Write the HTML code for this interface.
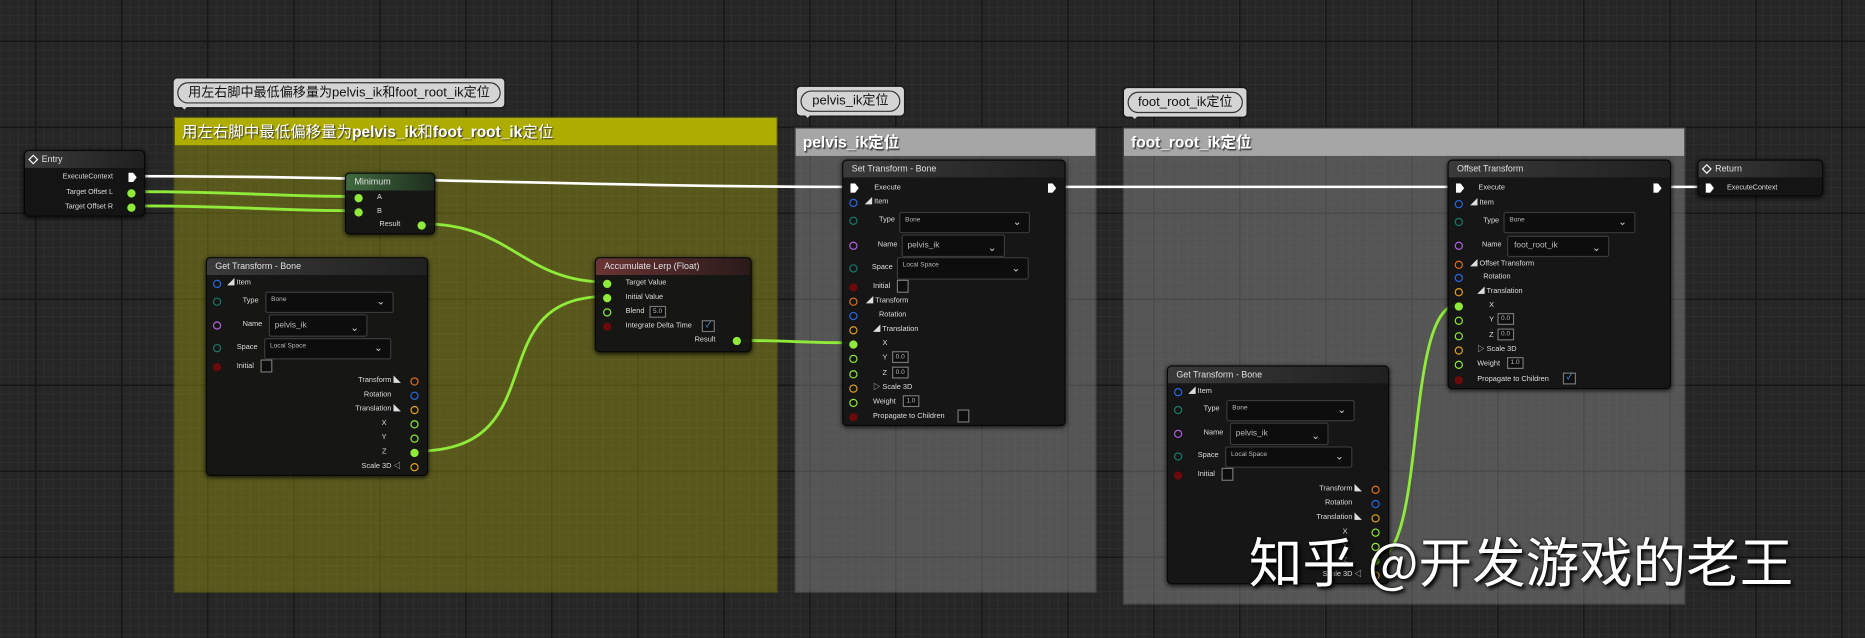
<!DOCTYPE html>
<html><head><meta charset="utf-8"><style>
html,body{margin:0;padding:0;width:1865px;height:638px;overflow:hidden}
body{background-color:#262626;
background-image:linear-gradient(90deg,#161616 1.5px,transparent 1.5px),linear-gradient(0deg,#161616 1.5px,transparent 1.5px),linear-gradient(90deg,#2e2e2e 1px,transparent 1px),linear-gradient(0deg,#2e2e2e 1px,transparent 1px);
background-size:86px 86px,86px 86px,8.6px 8.6px,8.6px 8.6px;background-position:35px 0,0 42px,35px 0,0 42px;
font-family:"Liberation Sans","Noto Sans CJK SC",sans-serif}
#w{position:absolute;left:0;top:0;width:1568px;height:536px;transform:scale(1.18941,1.1903);transform-origin:0 0}
.a{position:absolute}
.cm{position:absolute;border:1px solid rgba(0,0,0,.2)}
.ch{position:absolute;left:0;right:0;top:0;height:23px;color:#fff;font-size:13px;line-height:23px;padding-left:6px;text-shadow:1px 1px 1px #333;white-space:nowrap}
.bb{position:absolute;background:#d4d4d4;border-radius:3px;height:24px;box-shadow:0 0 2px #000}
.bb span{position:absolute;left:3px;right:3px;top:3px;bottom:3px;border:1px solid #333;border-radius:10px;font-size:11px;color:#111;line-height:16px;text-align:center;white-space:nowrap}
.bb:after{content:"";position:absolute;left:6px;bottom:-5px;border:3px solid transparent;border-top:3px solid #d4d4d4}
.n{position:absolute;background:rgba(20,20,20,.96);border:1px solid #070707;border-radius:4px;box-shadow:0 1px 4px rgba(0,0,0,.8)}
.h{position:absolute;left:0;right:0;top:0;height:14px;border-radius:3px 3px 0 0;color:#e0e0e0;font-size:7.5px;line-height:14px;padding-left:7px;white-space:nowrap;background:linear-gradient(90deg,#3a3a3a,#202020)}
.t{position:absolute;color:#ddd;font-size:6.2px;line-height:8px;white-space:nowrap}
.p{position:absolute;width:5px;height:5px;border:1.4px solid;border-radius:50%}
.f{background:currentColor}
.dd{position:absolute;background:#0d0d0d;border:1px solid #3a3a3a;border-radius:2px;color:#bbb;font-size:5.5px;white-space:nowrap}
.dd:after{content:"⌄";position:absolute;right:6px;top:50%;margin-top:-7px;font-size:9px;color:#ccc}
.bx{position:absolute;border:1px solid #777;background:#0d0d0d;color:#bbb;font-size:5.5px;line-height:8px;padding:0 2px}
.ex{position:absolute;width:7px;height:8px;background:#fff;clip-path:polygon(0 0,55% 0,100% 50%,55% 100%,0 100%)}
</style></head><body><div id="w">

<div class="cm" style="left:146px;top:98px;width:506px;height:398px;background:rgba(150,150,20,.45)"><div class="ch" style="background:#afac00">用左右脚中最低偏移量为<b>pelvis_ik</b>和<b>foot_root_ik</b>定位</div></div>
<div class="cm" style="left:668px;top:107px;width:252px;height:389px;background:rgba(150,150,150,.42)"><div class="ch" style="background:#a6a6a6;font-weight:bold">pelvis_ik定位</div></div>
<div class="cm" style="left:944px;top:107px;width:471px;height:399px;background:rgba(150,150,150,.42)"><div class="ch" style="background:#a6a6a6;font-weight:bold">foot_root_ik定位</div></div>
<div class="bb" style="left:146px;top:66px;width:278px"><span>用左右脚中最低偏移量为pelvis_ik和foot_root_ik定位</span></div>
<div class="bb" style="left:670px;top:73px;width:90px"><span>pelvis_ik定位</span></div>
<div class="bb" style="left:945px;top:74px;width:103px"><span>foot_root_ik定位</span></div>

<svg class="a" style="left:0;top:0" width="1568" height="536" fill="none">
<path d="M120 148 C300 148 520 157 710 157" stroke="#fff" stroke-width="2.2"/>
<path d="M894 157 L1218 157 M1403 157 L1428 157" stroke="#fff" stroke-width="2.2"/>
<g stroke="#8fea3a" stroke-width="2.4">
<path d="M120 161 C200 161 230 165 300 165"/>
<path d="M120 173 C200 173 230 177 300 177"/>
<path d="M356 188 C430 188 440 237 510 237"/>
<path d="M350 379 C470 379 400 249 510 249"/>
<path d="M620 286 C670 286 670 288 716 288"/>
<path d="M1157 469 C1200 469 1180 256 1226 256"/>
</g></svg>

<div class="n" style="left:20px;top:126px;width:100px;height:54px">
<div class="h" style="padding-left:14px">Entry</div><div class="a" style="left:4px;top:4px;width:4px;height:4px;border:1px solid #fff;transform:rotate(45deg)"></div>
<div class="t" style="right:26px;top:18px;font-size:6px">ExecuteContext</div><div class="ex" style="left:87px;top:18px"></div>
<div class="t" style="right:26px;top:31px;font-size:6px">Target Offset L</div><i class="p f" style="left:86px;top:32px;color:#8fea3a"></i>
<div class="t" style="right:26px;top:43px;font-size:6px">Target Offset R</div><i class="p f" style="left:86px;top:44px;color:#8fea3a"></i>
</div>

<div class="n" style="left:290px;top:145px;width:74px;height:50px">
<div class="h" style="background:linear-gradient(90deg,#3f6a3f,#1e2e1e)">Minimum</div>
<i class="p f" style="left:7px;top:17px;color:#8fea3a"></i><div class="t" style="left:26px;top:16px">A</div>
<i class="p f" style="left:7px;top:29px;color:#8fea3a"></i><div class="t" style="left:26px;top:28px">B</div>
<div class="t" style="left:28px;top:39px">Result</div><i class="p f" style="left:60px;top:40px;color:#8fea3a"></i>
</div>

<div class="n" style="left:500px;top:216px;width:130px;height:78px">
<div class="h" style="background:linear-gradient(90deg,#6a3434,#2a1a1a)">Accumulate Lerp (Float)</div>
<i class="p f" style="left:6px;top:18px;color:#8fea3a"></i><div class="t" style="left:25px;top:17px">Target Value</div>
<i class="p f" style="left:6px;top:30px;color:#8fea3a"></i><div class="t" style="left:25px;top:29px">Initial Value</div>
<i class="p" style="left:6px;top:42px;color:#8fea3a"></i><div class="t" style="left:25px;top:41px">Blend</div><div class="bx" style="left:45px;top:40px">5.0</div>
<i class="p f" style="left:6px;top:54px;color:#6a0a0a"></i><div class="t" style="left:25px;top:53px">Integrate Delta Time</div><div class="bx" style="left:89px;top:52px;color:#4af;font-size:7px">✓</div>
<div class="t" style="left:83px;top:65px">Result</div><i class="p f" style="left:115px;top:66px;color:#8fea3a"></i>
</div>

<div class="n" style="left:173px;top:216px;width:185px;height:182px">
<div class="h">Get Transform - Bone</div>
<i class="p" style="left:5px;top:18px;color:#2a6ae0"></i><div class="t" style="left:17px;top:17px">◢ Item</div>
<i class="p" style="left:5px;top:33px;color:#1a7a6a"></i><div class="t" style="left:30px;top:32px">Type</div><div class="dd" style="left:49px;top:28px;width:106px;height:16px;line-height:12px;text-indent:4px">Bone</div>
<i class="p" style="left:5px;top:53px;color:#b060e0"></i><div class="t" style="left:30px;top:52px">Name</div><div class="dd" style="left:52px;top:47px;width:81px;height:17px;line-height:17px;text-indent:4px;font-size:7px">pelvis_ik</div>
<i class="p" style="left:5px;top:72px;color:#1a7a6a"></i><div class="t" style="left:25px;top:71px">Space</div><div class="dd" style="left:48px;top:67px;width:105px;height:16px;line-height:12px;text-indent:4px">Local Space</div>
<i class="p f" style="left:5px;top:88px;color:#6a0a0a"></i><div class="t" style="left:25px;top:87px">Initial</div><div class="bx" style="left:45px;top:85px;width:4px;height:9px"></div>
<div class="t" style="right:22px;top:99px">Transform ◣</div><i class="p" style="left:171px;top:100px;color:#e07020"></i>
<div class="t" style="right:30px;top:111px">Rotation</div><i class="p" style="left:171px;top:112px;color:#2a6ae0"></i>
<div class="t" style="right:22px;top:123px">Translation ◣</div><i class="p" style="left:171px;top:124px;color:#e0a020"></i>
<div class="t" style="right:34px;top:135px">X</div><i class="p" style="left:171px;top:136px;color:#8fea3a"></i>
<div class="t" style="right:34px;top:147px">Y</div><i class="p" style="left:171px;top:148px;color:#8fea3a"></i>
<div class="t" style="right:34px;top:159px">Z</div><i class="p f" style="left:171px;top:160px;color:#8fea3a"></i>
<div class="t" style="right:22px;top:171px">Scale 3D ◁</div><i class="p" style="left:171px;top:172px;color:#e0a020"></i>
</div>

<div class="n" style="left:708px;top:134px;width:186px;height:222px">
<div class="h">Set Transform - Bone</div>
<div class="ex" style="left:6px;top:19px"></div><div class="t" style="left:26px;top:19px">Execute</div><div class="ex" style="left:172px;top:19px"></div>
<i class="p" style="left:5px;top:32px;color:#2a6ae0"></i><div class="t" style="left:18px;top:31px">◢ Item</div>
<i class="p" style="left:5px;top:47px;color:#1a7a6a"></i><div class="t" style="left:30px;top:46px">Type</div><div class="dd" style="left:47px;top:43px;width:108px;height:16px;line-height:12px;text-indent:4px">Bone</div>
<i class="p" style="left:5px;top:68px;color:#b060e0"></i><div class="t" style="left:29px;top:67px">Name</div><div class="dd" style="left:49px;top:62px;width:85px;height:17px;line-height:17px;text-indent:4px;font-size:7px">pelvis_ik</div>
<i class="p" style="left:5px;top:87px;color:#1a7a6a"></i><div class="t" style="left:24px;top:86px">Space</div><div class="dd" style="left:45px;top:81px;width:109px;height:17px;line-height:12px;text-indent:4px">Local Space</div>
<i class="p f" style="left:5px;top:103px;color:#6a0a0a"></i><div class="t" style="left:25px;top:102px">Initial</div><div class="bx" style="left:45px;top:100px;width:4px;height:9px"></div>
<i class="p" style="left:5px;top:115px;color:#e07020"></i><div class="t" style="left:19px;top:114px">◢ Transform</div>
<i class="p" style="left:5px;top:127px;color:#2a6ae0"></i><div class="t" style="left:30px;top:126px">Rotation</div>
<i class="p" style="left:5px;top:139px;color:#e0a020"></i><div class="t" style="left:25px;top:138px">◢ Translation</div>
<i class="p f" style="left:5px;top:151px;color:#8fea3a"></i><div class="t" style="left:33px;top:150px">X</div>
<i class="p" style="left:5px;top:163px;color:#8fea3a"></i><div class="t" style="left:33px;top:162px">Y</div><div class="bx" style="left:41px;top:160px">0.0</div>
<i class="p" style="left:5px;top:176px;color:#8fea3a"></i><div class="t" style="left:33px;top:175px">Z</div><div class="bx" style="left:41px;top:173px">0.0</div>
<i class="p" style="left:5px;top:188px;color:#e0a020"></i><div class="t" style="left:25px;top:187px">▷ Scale 3D</div>
<i class="p" style="left:5px;top:200px;color:#8fea3a"></i><div class="t" style="left:25px;top:199px">Weight</div><div class="bx" style="left:50px;top:197px">1.0</div>
<i class="p f" style="left:5px;top:212px;color:#6a0a0a"></i><div class="t" style="left:25px;top:211px">Propagate to Children</div><div class="bx" style="left:96px;top:209px;width:4px;height:9px"></div>
</div>

<div class="n" style="left:1217px;top:134px;width:186px;height:191px">
<div class="h">Offset Transform</div>
<div class="ex" style="left:6px;top:19px"></div><div class="t" style="left:25px;top:19px">Execute</div><div class="ex" style="left:172px;top:19px"></div>
<i class="p" style="left:5px;top:33px;color:#2a6ae0"></i><div class="t" style="left:18px;top:32px">◢ Item</div>
<i class="p" style="left:5px;top:48px;color:#1a7a6a"></i><div class="t" style="left:29px;top:47px">Type</div><div class="dd" style="left:46px;top:43px;width:109px;height:16px;line-height:12px;text-indent:4px">Bone</div>
<i class="p" style="left:5px;top:68px;color:#b060e0"></i><div class="t" style="left:28px;top:67px">Name</div><div class="dd" style="left:49px;top:63px;width:84px;height:16px;line-height:16px;text-indent:5px;font-size:7px">foot_root_ik</div>
<i class="p" style="left:5px;top:84px;color:#e07020"></i><div class="t" style="left:18px;top:83px">◢ Offset Transform</div>
<i class="p" style="left:5px;top:95px;color:#2a6ae0"></i><div class="t" style="left:29px;top:94px">Rotation</div>
<i class="p" style="left:5px;top:107px;color:#e0a020"></i><div class="t" style="left:24px;top:106px">◢ Translation</div>
<i class="p f" style="left:5px;top:119px;color:#8fea3a"></i><div class="t" style="left:34px;top:118px">X</div>
<i class="p" style="left:5px;top:131px;color:#8fea3a"></i><div class="t" style="left:34px;top:130px">Y</div><div class="bx" style="left:41px;top:128px">0.0</div>
<i class="p" style="left:5px;top:144px;color:#8fea3a"></i><div class="t" style="left:34px;top:143px">Z</div><div class="bx" style="left:41px;top:141px">0.0</div>
<i class="p" style="left:5px;top:156px;color:#e0a020"></i><div class="t" style="left:24px;top:155px">▷ Scale 3D</div>
<i class="p" style="left:5px;top:168px;color:#8fea3a"></i><div class="t" style="left:24px;top:167px">Weight</div><div class="bx" style="left:49px;top:165px">1.0</div>
<i class="p f" style="left:5px;top:181px;color:#6a0a0a"></i><div class="t" style="left:24px;top:180px">Propagate to Children</div><div class="bx" style="left:96px;top:178px;color:#4af;font-size:7px">✓</div>
</div>

<div class="n" style="left:1427px;top:134px;width:104px;height:29px">
<div class="h" style="padding-left:14px">Return</div><div class="a" style="left:4px;top:4px;width:4px;height:4px;border:1px solid #fff;transform:rotate(45deg)"></div>
<div class="ex" style="left:6px;top:19px"></div><div class="t" style="left:24px;top:19px;font-size:6px">ExecuteContext</div>
</div>

<div class="n" style="left:981px;top:307px;width:185px;height:182px">
<div class="h">Get Transform - Bone</div>
<i class="p" style="left:5px;top:18px;color:#2a6ae0"></i><div class="t" style="left:17px;top:17px">◢ Item</div>
<i class="p" style="left:5px;top:33px;color:#1a7a6a"></i><div class="t" style="left:30px;top:32px">Type</div><div class="dd" style="left:49px;top:28px;width:106px;height:16px;line-height:12px;text-indent:4px">Bone</div>
<i class="p" style="left:5px;top:53px;color:#b060e0"></i><div class="t" style="left:30px;top:52px">Name</div><div class="dd" style="left:52px;top:47px;width:81px;height:17px;line-height:17px;text-indent:4px;font-size:7px">pelvis_ik</div>
<i class="p" style="left:5px;top:72px;color:#1a7a6a"></i><div class="t" style="left:25px;top:71px">Space</div><div class="dd" style="left:48px;top:67px;width:105px;height:16px;line-height:12px;text-indent:4px">Local Space</div>
<i class="p f" style="left:5px;top:88px;color:#6a0a0a"></i><div class="t" style="left:25px;top:87px">Initial</div><div class="bx" style="left:45px;top:85px;width:4px;height:9px"></div>
<div class="t" style="right:22px;top:99px">Transform ◣</div><i class="p" style="left:171px;top:100px;color:#e07020"></i>
<div class="t" style="right:30px;top:111px">Rotation</div><i class="p" style="left:171px;top:112px;color:#2a6ae0"></i>
<div class="t" style="right:22px;top:123px">Translation ◣</div><i class="p" style="left:171px;top:124px;color:#e0a020"></i>
<div class="t" style="right:34px;top:135px">X</div><i class="p" style="left:171px;top:136px;color:#8fea3a"></i>
<div class="t" style="right:34px;top:147px">Y</div><i class="p" style="left:171px;top:148px;color:#8fea3a"></i>
<div class="t" style="right:34px;top:159px">Z</div><i class="p f" style="left:171px;top:160px;color:#8fea3a"></i>
<div class="t" style="right:22px;top:171px">Scale 3D ◁</div><i class="p" style="left:171px;top:172px;color:#e0a020"></i>
</div>

<div class="a" style="left:1050px;top:440px;font-size:45px;line-height:60px;color:#fff;white-space:nowrap;text-shadow:2px 2px 3px #000,0 0 2px #000;font-family:'Noto Sans CJK SC','Liberation Sans',sans-serif">知乎 @开发游戏的老王</div>

</div></body></html>
